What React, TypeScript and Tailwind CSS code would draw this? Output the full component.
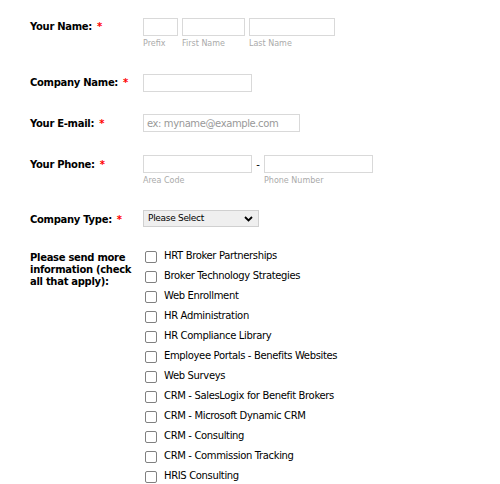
import React from "react";

const font = { fontFamily: '"DejaVu Sans", Verdana, sans-serif' };

function Label({ children }: { children: React.ReactNode }) {
  return (
    <div className="w-[113px] shrink-0 text-[10px] font-bold leading-[12px] tracking-[-0.3px] text-black">
      {children}
    </div>
  );
}

function Req() {
  return <span className="ml-[5px] text-[#ff0000]">*</span>;
}

const items = [
  "HRT Broker Partnerships",
  "Broker Technology Strategies",
  "Web Enrollment",
  "HR Administration",
  "HR Compliance Library",
  "Employee Portals - Benefits Websites",
  "Web Surveys",
  "CRM - SalesLogix for Benefit Brokers",
  "CRM - Microsoft Dynamic CRM",
  "CRM - Consulting",
  "CRM - Commission Tracking",
  "HRIS Consulting",
];

export default function App() {
  return (
    <div className="h-[484px] w-[500px] overflow-hidden bg-white pl-[30px]" style={font}>
      {/* Name */}
      <div className="flex pt-[18px]">
        <div className="pt-[3px]">
          <Label>
            Your Name:<Req />
          </Label>
        </div>
        <div className="flex gap-[4px]">
          <div className="flex flex-col">
            <div className="h-[18px] w-[35px] border border-[#d9d9d9]" />
            <span className="mt-[3px] text-[8px] leading-[10px] text-[#aaaaaa]">Prefix</span>
          </div>
          <div className="flex flex-col">
            <div className="h-[18px] w-[63px] border border-[#d9d9d9]" />
            <span className="mt-[3px] text-[8px] leading-[10px] text-[#aaaaaa]">First Name</span>
          </div>
          <div className="flex flex-col">
            <div className="h-[18px] w-[86px] border border-[#d9d9d9]" />
            <span className="mt-[3px] text-[8px] leading-[10px] text-[#aaaaaa]">Last Name</span>
          </div>
        </div>
      </div>

      {/* Company Name */}
      <div className="mt-[25px] flex">
        <div className="pt-[3px]">
          <Label>
            Company Name:<Req />
          </Label>
        </div>
        <div className="h-[18px] w-[109px] border border-[#d9d9d9]" />
      </div>

      {/* Email */}
      <div className="mt-[22px] flex">
        <div className="pt-[4px]">
          <Label>
            Your E-mail:<Req />
          </Label>
        </div>
        <div className="flex h-[18px] w-[157px] items-center whitespace-nowrap border border-[#d9d9d9] pl-[3px] text-[10px] tracking-[-0.4px] text-[#999999]">
          ex: myname@example.com
        </div>
      </div>

      {/* Phone */}
      <div className="mt-[23px] flex">
        <div className="pt-[4px]">
          <Label>
            Your Phone:<Req />
          </Label>
        </div>
        <div className="flex flex-col">
          <div className="h-[18px] w-[109px] border border-[#d9d9d9]" />
          <span className="mt-[3px] text-[8px] leading-[10px] text-[#aaaaaa]">Area Code</span>
        </div>
        <div className="flex h-[18px] w-[12px] items-center justify-center text-[10px] text-black">-</div>
        <div className="flex flex-col">
          <div className="h-[18px] w-[109px] border border-[#d9d9d9]" />
          <span className="mt-[3px] text-[8px] leading-[10px] text-[#aaaaaa]">Phone Number</span>
        </div>
      </div>

      {/* Company Type */}
      <div className="mt-[24px] flex">
        <div className="pt-[4px]">
          <Label>
            Company Type:<Req />
          </Label>
        </div>
        <div className="flex h-[17px] w-[116px] items-center justify-between border border-[#d0d0d0] bg-[#efefef] pl-[4px] pr-[5px] text-[9px] tracking-[-0.3px] text-black">
          <span>Please Select</span>
          <svg width="9" height="6" viewBox="0 0 9 6">
            <path d="M1 1 L4.5 4.5 L8 1" stroke="#000" strokeWidth="1.8" fill="none" />
          </svg>
        </div>
      </div>

      {/* Checkboxes */}
      <div className="mt-[24px] flex">
        <div className="pt-[1px]">
          <Label>
            Please send more
            <br />
            information (check
            <br />
            all that apply):
          </Label>
        </div>
        <div className="-mt-[5px] flex flex-col pl-[2px]">
          {items.map((t) => (
            <div key={t} className="flex h-[20px] items-center">
              <div className="mt-[2px] h-[12px] w-[12px] rounded-[2px] border border-[#808080] bg-white" />
              <span className="ml-[7px] text-[10px] leading-[12px] tracking-[-0.35px] text-black">{t}</span>
            </div>
          ))}
        </div>
      </div>
    </div>
  );
}
